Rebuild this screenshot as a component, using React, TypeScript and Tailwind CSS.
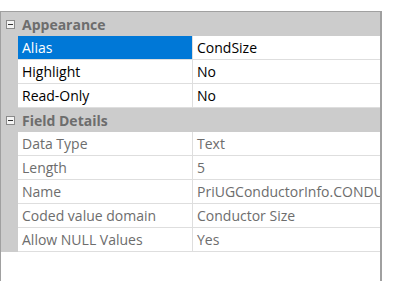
import React from 'react';

type Row = { name: string; value: string; readOnly?: boolean; selected?: boolean };
type Category = { title: string; rows: Row[] };

const categories: Category[] = [
  {
    title: 'Appearance',
    rows: [
      { name: 'Alias', value: 'CondSize', selected: true },
      { name: 'Highlight', value: 'No' },
      { name: 'Read-Only', value: 'No' },
    ],
  },
  {
    title: 'Field Details',
    rows: [
      { name: 'Data Type', value: 'Text', readOnly: true },
      { name: 'Length', value: '5', readOnly: true },
      { name: 'Name', value: 'PriUGConductorInfo.CONDUCTORSIZE', readOnly: true },
      { name: 'Coded value domain', value: 'Conductor Size', readOnly: true },
      { name: 'Allow NULL Values', value: 'Yes', readOnly: true },
    ],
  },
];

function Minus() {
  return (
    <span className="w-[9px] h-[9px] border border-[#8a8a8a] bg-[#f4f4f4] flex items-center justify-center">
      <span className="w-[5px] h-px bg-[#333]" />
    </span>
  );
}

export default function App() {
  return (
    <div
      className="w-[400px] h-[281px] bg-white pt-[11px] overflow-hidden"
      style={{ fontFamily: '"Open Sans", "Segoe UI", sans-serif' }}
    >
      <div className="w-[382px] h-[270px] border-l border-t border-[#a0a0a0] border-r-2 border-r-[#a0a0a0] bg-white">
        {categories.map((cat) => (
          <div key={cat.title}>
            <div className="h-6 bg-[#cccccc] flex items-center">
              <div className="w-[17px] flex justify-center pl-px">
                <Minus />
              </div>
              <span className="pl-1 text-[14px] font-bold text-[#6d6d6d]">{cat.title}</span>
            </div>
            {cat.rows.map((row) => (
              <div key={row.name} className="h-6 flex bg-[#cccccc]">
                <div className="w-[17px] shrink-0" />
                <div
                  className={
                    'w-[175px] shrink-0 pl-1 flex items-center text-[14px] border-b border-r border-[#dedede] ' +
                    (row.selected
                      ? 'bg-[#0078d7] text-white'
                      : row.readOnly
                        ? 'bg-white text-[#6d6d6d]'
                        : 'bg-white text-black')
                  }
                >
                  {row.name}
                </div>
                <div
                  className={
                    'flex-1 min-w-0 overflow-hidden whitespace-nowrap pl-1 flex items-center text-[14px] bg-white border-b border-[#dedede] ' +
                    (row.readOnly ? 'text-[#6d6d6d]' : 'text-black')
                  }
                >
                  {row.value}
                </div>
              </div>
            ))}
          </div>
        ))}
      </div>
    </div>
  );
}
